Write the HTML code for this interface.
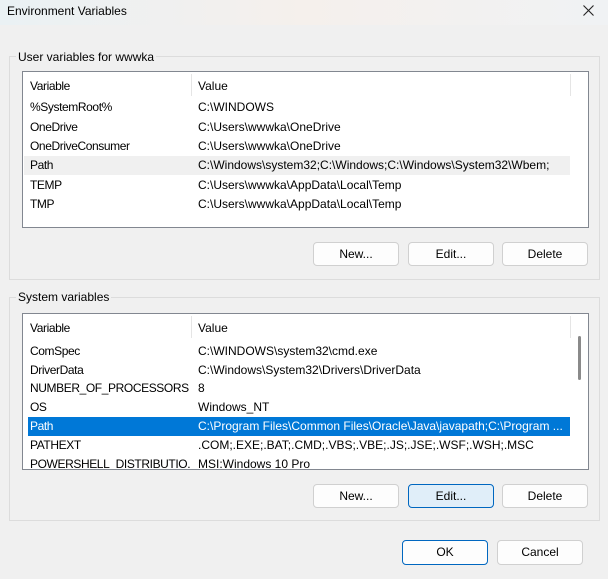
<!DOCTYPE html><html><head><style>
*{margin:0;padding:0;box-sizing:border-box}
body{width:608px;height:579px;background:#f0f0f0;font-family:"Liberation Sans",sans-serif;font-size:12px;color:#000;position:relative;overflow:hidden}
.abs{position:absolute}
.title{left:0;top:0;width:608px;height:25px;background:linear-gradient(90deg,#eaf1f4,#f5f0ec 50%,#f0f2f4)}
.grp{border:1px solid #dcdcdc}
.lbl{background:#f0f0f0;padding:0 2px;white-space:nowrap}
.list{background:#fff;border:1px solid #828790;overflow:hidden}
.row{position:absolute;left:0;height:19px;line-height:19px;white-space:nowrap}
.row span{position:absolute}
.row span:first-child{width:160px;overflow:hidden;letter-spacing:-0.4px}
.btn{background:#fdfdfd;border:1px solid #d0d0d0;border-radius:4px;text-align:center;line-height:22px}
</style></head><body>
<div class="abs title"></div>
<div class="abs" style="left:7px;top:4px">Environment Variables</div>
<svg class="abs" style="left:583px;top:5px" width="11" height="11"><path d="M0.5 0.5L10.5 10.5M10.5 0.5L0.5 10.5" stroke="#222" stroke-width="1.1"/></svg>

<div class="abs grp" style="left:9px;top:56px;width:591px;height:224px"></div>
<div class="abs lbl" style="left:16px;top:50px">User variables for wwwka</div>
<div class="abs list" style="left:22px;top:71px;width:567px;height:157px">
 <div class="abs" style="left:168px;top:2px;width:1px;height:22px;background:#e5e5e5"></div>
 <div class="abs" style="left:547px;top:2px;width:1px;height:22px;background:#e5e5e5"></div>
 <div class="row" style="top:5px"><span style="left:7px">Variable</span><span style="left:175px">Value</span></div>
 <div class="row" style="top:26px"><span style="left:7px">%SystemRoot%</span><span style="left:175px">C:\WINDOWS</span></div>
 <div class="row" style="top:45.5px"><span style="left:7px">OneDrive</span><span style="left:175px">C:\Users\wwwka\OneDrive</span></div>
 <div class="row" style="top:65px"><span style="left:7px">OneDriveConsumer</span><span style="left:175px">C:\Users\wwwka\OneDrive</span></div>
 <div class="row" style="top:84px;left:1px;width:546px;background:#f0f0f0"><span style="left:6px">Path</span><span style="left:174px">C:\Windows\system32;C:\Windows;C:\Windows\System32\Wbem;</span></div>
 <div class="row" style="top:104px"><span style="left:7px">TEMP</span><span style="left:175px">C:\Users\wwwka\AppData\Local\Temp</span></div>
 <div class="row" style="top:123px"><span style="left:7px">TMP</span><span style="left:175px">C:\Users\wwwka\AppData\Local\Temp</span></div>
</div>
<div class="abs btn" style="left:313px;top:242px;width:86px;height:24px">New...</div>
<div class="abs btn" style="left:408px;top:242px;width:86px;height:24px">Edit...</div>
<div class="abs btn" style="left:502px;top:242px;width:86px;height:24px">Delete</div>

<div class="abs grp" style="left:9px;top:297px;width:591px;height:224px"></div>
<div class="abs lbl" style="left:16px;top:290px">System variables</div>
<div class="abs list" style="left:22px;top:313px;width:567px;height:157px">
 <div class="abs" style="left:168px;top:2px;width:1px;height:22px;background:#e5e5e5"></div>
 <div class="abs" style="left:547px;top:2px;width:1px;height:22px;background:#e5e5e5"></div>
 <div class="abs" style="left:555px;top:22px;width:3px;height:44px;background:#8a8a8a;border-radius:2px"></div>
 <div class="row" style="top:5px"><span style="left:7px">Variable</span><span style="left:175px">Value</span></div>
 <div class="row" style="top:28px"><span style="left:7px">ComSpec</span><span style="left:175px">C:\WINDOWS\system32\cmd.exe</span></div>
 <div class="row" style="top:47px"><span style="left:7px">DriverData</span><span style="left:175px">C:\Windows\System32\Drivers\DriverData</span></div>
 <div class="row" style="top:65px"><span style="left:7px">NUMBER_OF_PROCESSORS</span><span style="left:175px">8</span></div>
 <div class="row" style="top:84px"><span style="left:7px">OS</span><span style="left:175px">Windows_NT</span></div>
 <div class="row" style="top:103px;left:5px;width:542px;background:#0078d7;color:#fff"><span style="left:2px">Path</span><span style="left:170px">C:\Program Files\Common Files\Oracle\Java\javapath;C:\Program ...</span></div>
 <div class="row" style="top:122px"><span style="left:7px">PATHEXT</span><span style="left:175px">.COM;.EXE;.BAT;.CMD;.VBS;.VBE;.JS;.JSE;.WSF;.WSH;.MSC</span></div>
 <div class="row" style="top:141px"><span style="left:7px">POWERSHELL_DISTRIBUTIO...</span><span style="left:175px">MSI:Windows 10 Pro</span></div>
</div>
<div class="abs btn" style="left:313px;top:484px;width:86px;height:24px">New...</div>
<div class="abs btn" style="left:408px;top:484px;width:86px;height:24px;background:#e0eef9;border-color:#0067c0">Edit...</div>
<div class="abs btn" style="left:502px;top:484px;width:86px;height:24px">Delete</div>

<div class="abs btn" style="left:402px;top:540px;width:86px;height:25px;border-color:#0067c0;line-height:23px">OK</div>
<div class="abs btn" style="left:497px;top:540px;width:86px;height:25px;line-height:23px">Cancel</div>
</body></html>
